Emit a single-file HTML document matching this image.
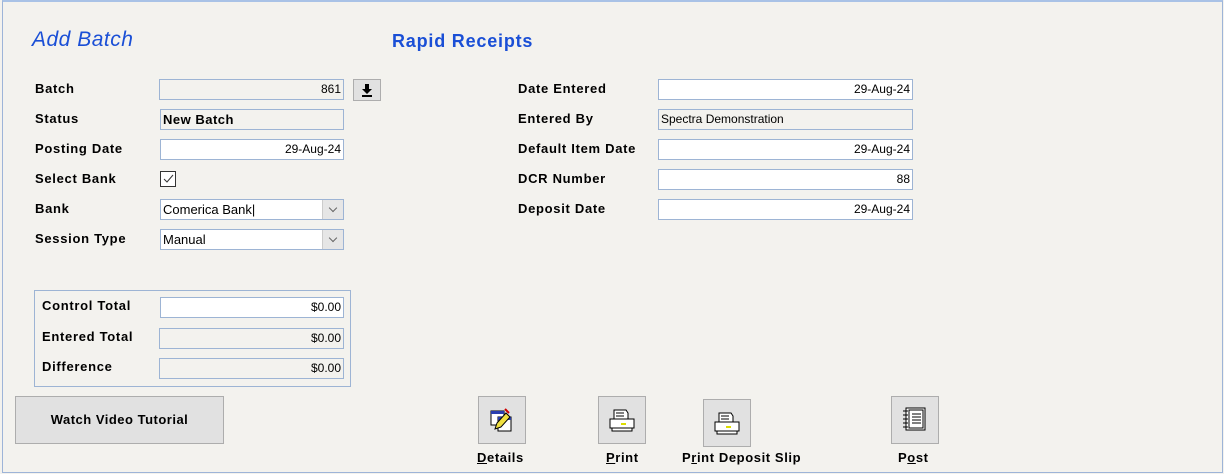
<!DOCTYPE html>
<html><head><style>
*{box-sizing:border-box;margin:0;padding:0}
body{width:1224px;height:474px;background:#f3f2ee;font-family:"Liberation Sans",Arial,sans-serif;font-size:13px;color:#000;position:relative;overflow:hidden}
.frame{position:absolute;left:2px;top:0;width:1221px;height:473px;border:1px solid #9db4d8;border-top:2px solid #a9c2e6}
.a{position:absolute}
.lbl{position:absolute;font-weight:bold;font-size:13px;letter-spacing:0.7px}
.in{position:absolute;height:21px;border:1px solid #9db4d4;background:#fff;font-size:12px;line-height:19px;padding:0 2px;text-align:right}
.ro{background:#f3f2ee}
.l{text-align:left}
.dd{position:absolute;right:0;top:0;width:21px;height:19px;background:#e6e6e6;border-left:1px solid #ccc}
.dd:after{content:"";position:absolute;left:7px;top:5px;width:5px;height:5px;border-right:1px solid #666;border-bottom:1px solid #666;transform:rotate(45deg)}
.btn{position:absolute;width:48px;height:48px;background:#e1e1e1;border:1px solid #adadad}
.bl{position:absolute;font-weight:bold;font-size:13px;letter-spacing:0.6px}
</style></head><body>
<div class="frame"></div>
<div class="a" style="left:32px;top:28px;font-size:21px;font-style:italic;color:#1a4fd6;letter-spacing:0.5px">Add Batch</div>
<div class="a" style="left:392px;top:31px;font-size:18px;font-weight:bold;color:#1a4fd6;letter-spacing:0.8px">Rapid Receipts</div>

<div class="lbl" style="left:35px;top:81px">Batch</div>
<div class="in ro" style="left:159px;top:79px;width:185px">861</div>
<div class="a" style="left:353px;top:79px;width:28px;height:22px;background:#e1e1e1;border:1px solid #adadad">
<svg width="26" height="20" viewBox="0 0 26 20"><path d="M11 4h4v5h3l-5 5-5-5h3z" fill="#000"/><rect x="8" y="15" width="10" height="2" fill="#000"/></svg></div>
<div class="lbl" style="left:35px;top:111px">Status</div>
<div class="in ro l" style="left:160px;top:109px;width:184px;font-weight:bold;font-size:13px;letter-spacing:0.5px">New Batch</div>
<div class="lbl" style="left:35px;top:141px">Posting Date</div>
<div class="in" style="left:160px;top:139px;width:184px">29-Aug-24</div>
<div class="lbl" style="left:35px;top:171px">Select Bank</div>
<div class="a" style="left:160px;top:171px;width:16px;height:16px;border:1px solid #333;background:#fff"><svg width="14" height="14"><path d="M3 7l3 3 6-7" stroke="#333" fill="none" stroke-width="1"/></svg></div>
<div class="lbl" style="left:35px;top:201px">Bank</div>
<div class="in l" style="left:160px;top:199px;width:184px;font-size:13px">Comerica Bank|<div class="dd"></div></div>
<div class="lbl" style="left:35px;top:231px">Session Type</div>
<div class="in l" style="left:160px;top:229px;width:184px;font-size:13px">Manual<div class="dd"></div></div>

<div class="lbl" style="left:518px;top:81px">Date Entered</div>
<div class="in" style="left:658px;top:79px;width:255px">29-Aug-24</div>
<div class="lbl" style="left:518px;top:111px">Entered By</div>
<div class="in ro l" style="left:658px;top:109px;width:255px">Spectra Demonstration</div>
<div class="lbl" style="left:518px;top:141px">Default Item Date</div>
<div class="in" style="left:658px;top:139px;width:255px">29-Aug-24</div>
<div class="lbl" style="left:518px;top:171px">DCR Number</div>
<div class="in" style="left:658px;top:169px;width:255px">88</div>
<div class="lbl" style="left:518px;top:201px">Deposit Date</div>
<div class="in" style="left:658px;top:199px;width:255px">29-Aug-24</div>

<div class="a" style="left:34px;top:290px;width:317px;height:97px;border:1px solid #9db4d4"></div>
<div class="lbl" style="left:42px;top:298px">Control Total</div>
<div class="in" style="left:160px;top:297px;width:184px">$0.00</div>
<div class="lbl" style="left:42px;top:329px">Entered Total</div>
<div class="in ro" style="left:159px;top:328px;width:185px">$0.00</div>
<div class="lbl" style="left:42px;top:359px">Difference</div>
<div class="in ro" style="left:159px;top:358px;width:185px">$0.00</div>

<div class="a" style="left:15px;top:396px;width:209px;height:48px;background:#e1e1e1;border:1px solid #adadad;text-align:center;line-height:46px;font-weight:bold;font-size:13px;letter-spacing:0.5px">Watch Video Tutorial</div>

<div class="btn" style="left:478px;top:396px"><svg width="46" height="46"><rect x="12" y="14" width="13" height="14" fill="#fff" stroke="#000"/><rect x="12" y="14" width="13" height="3" fill="#2a3fae"/><rect x="19" y="20" width="13" height="14" fill="#fff" stroke="#000"/><rect x="19" y="20" width="13" height="3" fill="#2a3fae"/><path d="M22 30l-6 2 2-6 9-10 4 4z" fill="#f0e040" stroke="#000"/><path d="M26 12l4 4" stroke="#c00" stroke-width="2"/></svg></div>
<div class="bl" style="left:477px;top:450px"><u>D</u>etails</div>
<div class="btn" style="left:598px;top:396px"><svg width="46" height="46"><path d="M15 13h12l2 3v6H15z" fill="#fff" stroke="#000"/><path d="M11 22h24v9H11z" fill="#fff" stroke="#000"/><path d="M13 31h20v3H13z" fill="#fff" stroke="#000"/><rect x="22" y="26" width="5" height="2" fill="#dd0"/><path d="M17 16h8M17 19h8" stroke="#000"/></svg></div>
<div class="bl" style="left:606px;top:450px"><u>P</u>rint</div>
<div class="btn" style="left:703px;top:399px"><svg width="46" height="46"><path d="M15 13h12l2 3v6H15z" fill="#fff" stroke="#000"/><path d="M11 22h24v9H11z" fill="#fff" stroke="#000"/><path d="M13 31h20v3H13z" fill="#fff" stroke="#000"/><rect x="22" y="26" width="5" height="2" fill="#dd0"/><path d="M17 16h8M17 19h8" stroke="#000"/></svg></div>
<div class="bl" style="left:682px;top:450px">P<u>r</u>int Deposit Slip</div>
<div class="btn" style="left:891px;top:396px"><svg width="46" height="46"><rect x="14" y="11" width="19" height="22" fill="#fff" stroke="#000"/><rect x="17" y="13" width="14" height="18" fill="#fff" stroke="#000"/><path d="M11 14h5M11 18h5M11 22h5M11 26h5M11 30h5M20 17h9M20 20h9M20 23h9M20 26h9" stroke="#000"/></svg></div>
<div class="bl" style="left:898px;top:450px">P<u>o</u>st</div>
</body></html>
